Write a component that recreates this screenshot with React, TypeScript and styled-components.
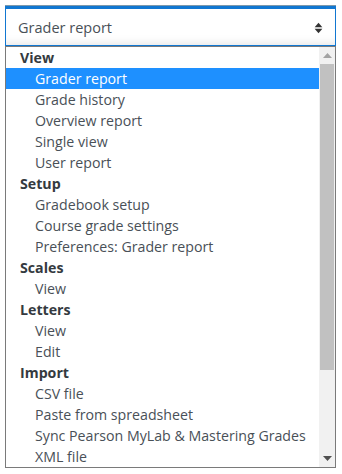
import React from "react";
import styled, { createGlobalStyle } from "styled-components";

const groups = [
  { label: "View", items: ["Grader report", "Grade history", "Overview report", "Single view", "User report"] },
  { label: "Setup", items: ["Gradebook setup", "Course grade settings", "Preferences: Grader report"] },
  { label: "Scales", items: ["View"] },
  { label: "Letters", items: ["View", "Edit"] },
  { label: "Import", items: ["CSV file", "Paste from spreadsheet", "Sync Pearson MyLab & Mastering Grades", "XML file"] },
];

const selected = "Grader report";

const GlobalStyle = createGlobalStyle`
  body {
    margin: 0;
    background: #ffffff;
    font-family: "Open Sans", "Noto Sans", sans-serif;
  }
`;

export default function App() {
  return (
    <>
      <GlobalStyle />
      <Page>
        <Select>
          <SelectText>{selected}</SelectText>
          <Caret viewBox="0 0 10 14">
            <path d="M5 1 L9.5 6 H0.5 Z" fill="#333" />
            <path d="M5 13 L9.5 8 H0.5 Z" fill="#333" />
          </Caret>
        </Select>
        <ListBox>
          <Options>
            {groups.map((g, gi) =>
              [
                <GroupLabel key={`g${gi}`}>{g.label}</GroupLabel>,
                ...g.items.map((item, ii) => (
                  <Option key={`o${gi}-${ii}`} active={gi === 0 && item === selected}>
                    {item}
                  </Option>
                )),
              ]
            )}
          </Options>
          <ScrollBar>
            <ArrowButton>
              <svg width="9" height="5" viewBox="0 0 9 5">
                <path d="M4.5 0 L9 5 H0 Z" fill="#a3a3a3" />
              </svg>
            </ArrowButton>
            <Track>
              <Thumb />
            </Track>
            <ArrowButton>
              <svg width="9" height="5" viewBox="0 0 9 5">
                <path d="M0 0 H9 L4.5 5 Z" fill="#505050" />
              </svg>
            </ArrowButton>
          </ScrollBar>
        </ListBox>
      </Page>
    </>
  );
}

const Page = styled.div`
  padding: 6px 6px 0 5px;
  width: 331px;
  display: flex;
  flex-direction: column;
`;

const Select = styled.div`
  height: 36px;
  display: flex;
  align-items: center;
  justify-content: space-between;
  padding: 0 12px 0 12px;
  border: 1px solid #1177d1;
  border-top: 3px solid #1177d1;
  box-shadow: 0 -1px 0 #7d98ab, inset 0 -8px 8px -6px rgba(0, 0, 0, 0.1);
  background: #ffffff;
`;

const SelectText = styled.span`
  font-size: 14.5px;
  color: #495057;
`;

const Caret = styled.svg`
  width: 9px;
  height: 12px;
  margin-top: 1px;
`;

const ListBox = styled.div`
  height: 420px;
  display: flex;
  border: 1px solid #7a7a7a;
  background: #ffffff;
  overflow: hidden;
`;

const Options = styled.div`
  flex: 1;
  display: flex;
  flex-direction: column;
`;

const GroupLabel = styled.div`
  height: 21px;
  line-height: 21px;
  padding-left: 14px;
  font-size: 14.2px;
  font-weight: 700;
  color: #343a40;
  white-space: nowrap;
`;

const Option = styled.div<{ active?: boolean }>`
  height: 21px;
  line-height: 21px;
  padding-left: 29px;
  font-size: 14.2px;
  white-space: nowrap;
  color: ${({ active }) => (active ? "#ffffff" : "#495057")};
  background: ${({ active }) => (active ? "#1e90ff" : "transparent")};
`;

const ScrollBar = styled.div`
  width: 16px;
  display: flex;
  flex-direction: column;
  background: #f1f1f1;
`;

const ArrowButton = styled.div`
  height: 17px;
  display: flex;
  align-items: center;
  justify-content: center;
`;

const Track = styled.div`
  flex: 1;
  display: flex;
  flex-direction: column;
  padding: 0 1px;
`;

const Thumb = styled.div`
  height: 306px;
  background: #c1c1c1;
`;
